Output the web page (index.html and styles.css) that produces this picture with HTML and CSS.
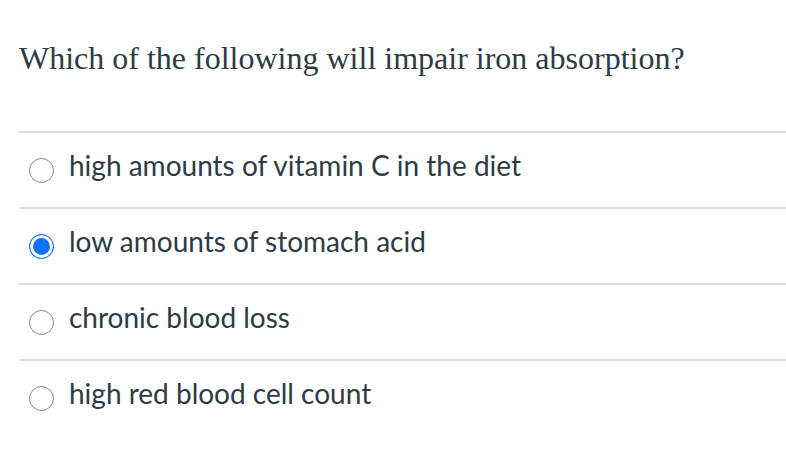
FILE: index.html
```html
<!DOCTYPE html>
<html>
<head>
<meta charset="utf-8">
<link rel="stylesheet" href="styles.css">
</head>
<body>
<div class="question">
  <div class="prompt">Which of the following will impair iron absorption?</div>
  <div class="answers">
    <label class="answer"><span class="radio"></span><span class="text">high amounts of vitamin C in the diet</span></label>
    <label class="answer"><span class="radio checked"></span><span class="text">low amounts of stomach acid</span></label>
    <label class="answer"><span class="radio"></span><span class="text">chronic blood loss</span></label>
    <label class="answer"><span class="radio"></span><span class="text">high red blood cell count</span></label>
  </div>
</div>
</body>
</html>
```
FILE: styles.css
```css
html, body {
  margin: 0;
  padding: 0;
  background: #ffffff;
}
.question {
  padding: 38px 0 0 19px;
  color: #2d3b45;
}
.prompt {
  font-family: "Liberation Serif", "Times New Roman", serif;
  font-size: 32px;
  line-height: 40px;
  margin-bottom: 53px;
}
.answers {
  display: flex;
  flex-direction: column;
}
.answer {
  display: flex;
  align-items: center;
  height: 74px;
  border-top: 2px solid #dddddd;
  padding-left: 10px;
}
.radio {
  width: 23px;
  height: 23px;
  border: 1.5px solid #8a8a8a;
  border-radius: 50%;
  margin-right: 15px;
  flex: none;
  box-sizing: content-box;
  background: #fff;
}
.radio.checked {
  border-color: #0b72ff;
  background: #0b72ff;
  box-shadow: inset 0 0 0 3px #ffffff;
}
.text {
  font-family: Lato, "Liberation Sans", sans-serif;
  font-size: 28px;
  line-height: 32px;
  padding-bottom: 10px;
}
```
